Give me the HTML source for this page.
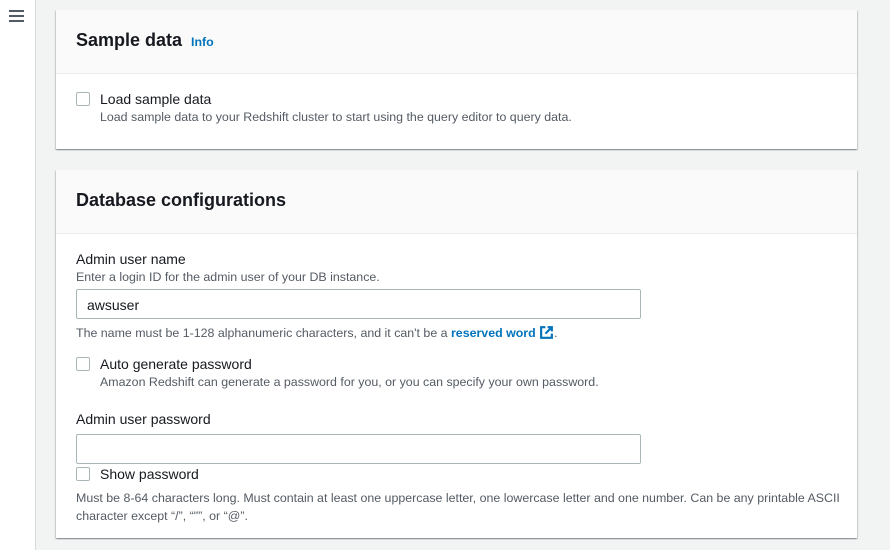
<!DOCTYPE html>
<html><head><style>
*{margin:0;padding:0;box-sizing:border-box}
body{width:890px;height:550px;background:#f2f3f3;font-family:"Liberation Sans",sans-serif;color:#16191f;position:relative;overflow:hidden}
.side{position:absolute;left:0;top:0;width:36px;height:550px;background:#fff;border-right:1px solid #d5dbdb}
.ham{position:absolute;left:9px;top:10px;width:15px}
.ham i{display:block;height:2px;background:#545b64;margin-bottom:3px}
.card{position:absolute;left:56px;width:801px;background:#fff;box-shadow:0 1px 1px rgba(0,28,36,.3),1px 1px 1px rgba(0,28,36,.15),-1px 1px 1px rgba(0,28,36,.15)}
.hd{background:#fafafa;border-bottom:1px solid #eaeded;position:absolute;left:0;top:0;right:0}
.t{position:absolute;left:20px;font-size:18px;font-weight:bold}
.abs{position:absolute;white-space:nowrap}
.lbl{font-size:14px}
.desc{font-size:12.4px;color:#545b64}
.cb{position:absolute;width:14px;height:14px;border:1px solid #aab7b8;border-radius:2px;background:#fff}
.in{position:absolute;left:20px;width:565px;height:30px;border:1px solid #aab7b8;border-radius:2px;background:#fff;font-size:14px;padding:7px 10px}
a{color:#0073bb;font-weight:bold;text-decoration:none}
</style></head><body>
<div class="side"><div class="ham"><i></i><i></i><i></i></div></div>

<div class="card" style="top:10px;height:139px">
 <div class="hd" style="height:64px"></div>
 <div class="t" style="top:20px">Sample data <a style="font-size:12.4px;margin-left:4px">Info</a></div>
 <div class="cb" style="left:20px;top:82px"></div>
 <div class="abs lbl" style="left:44px;top:81px">Load sample data</div>
 <div class="abs desc" style="left:44px;top:100px">Load sample data to your Redshift cluster to start using the query editor to query data.</div>
</div>

<div class="card" style="top:170px;height:368px">
 <div class="hd" style="height:64px"></div>
 <div class="t" style="top:20px">Database configurations</div>
 <div class="abs lbl" style="left:20px;top:81px">Admin user name</div>
 <div class="abs desc" style="left:20px;top:100px">Enter a login ID for the admin user of your DB instance.</div>
 <div class="in" style="top:119px">awsuser</div>
 <div class="abs desc" style="left:20px;top:155px">The name must be 1-128 alphanumeric characters, and it can't be a <a>reserved word <svg width="15" height="15" viewBox="0 0 14 14" style="vertical-align:-3px"><path d="M6 2H2v10h10V8M8 2h4v4M12 2L6 8" stroke="#0073bb" stroke-width="2" fill="none"/></svg></a>.</div>
 <div class="cb" style="left:20px;top:187px"></div>
 <div class="abs lbl" style="left:44px;top:186px">Auto generate password</div>
 <div class="abs desc" style="left:44px;top:205px">Amazon Redshift can generate a password for you, or you can specify your own password.</div>
 <div class="abs lbl" style="left:20px;top:241px">Admin user password</div>
 <div class="in" style="top:264px"></div>
 <div class="cb" style="left:20px;top:297px"></div>
 <div class="abs lbl" style="left:44px;top:296px">Show password</div>
 <div class="abs desc" style="left:20px;top:319px;line-height:18px;white-space:normal;width:775px">Must be 8-64 characters long. Must contain at least one uppercase letter, one lowercase letter and one number. Can be any printable ASCII character except “/”, “"”, or “@”.</div>
</div>
</body></html>
